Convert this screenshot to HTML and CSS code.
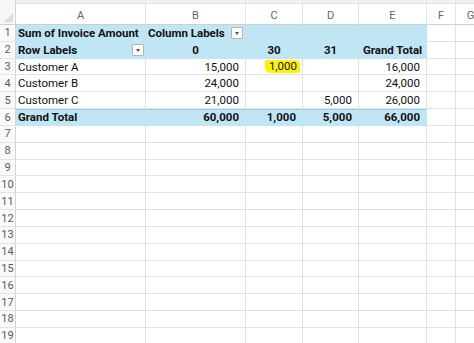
FILE: index.html
```html
<!DOCTYPE html>
<html lang="en">
<head>
    <meta charset="UTF-8">
    <title>Pivot Table</title>
    <link rel="stylesheet" href="styles.css">
</head>
<body>

<div class="sheet" id="sheet">
    <!-- column headers -->
    <div class="corner"><span class="corner-tri"></span></div>
    <div class="col-head">A</div>
    <div class="col-head">B</div>
    <div class="col-head">C</div>
    <div class="col-head">D</div>
    <div class="col-head">E</div>
    <div class="col-head">F</div>
    <div class="col-head">G</div>

    <!-- row 1 -->
    <div class="row-head">1</div>
    <div class="cell blue bold">Sum of Invoice Amount</div>
    <div class="cell blue bold">Column Labels <span class="drop drop-col"></span></div>
    <div class="cell blue"></div>
    <div class="cell blue"></div>
    <div class="cell blue"></div>
    <div class="cell"></div>
    <div class="cell"></div>

    <!-- row 2 -->
    <div class="row-head">2</div>
    <div class="cell blue bold">Row Labels <span class="drop drop-row"></span></div>
    <div class="cell blue bold center">0</div>
    <div class="cell blue bold center">30</div>
    <div class="cell blue bold center">31</div>
    <div class="cell blue bold center">Grand Total</div>
    <div class="cell"></div>
    <div class="cell"></div>

    <!-- row 3 -->
    <div class="row-head">3</div>
    <div class="cell">Customer A</div>
    <div class="cell num">15,000</div>
    <div class="cell num"><span class="marker">1,000</span></div>
    <div class="cell num"></div>
    <div class="cell num">16,000</div>
    <div class="cell"></div>
    <div class="cell"></div>

    <!-- row 4 -->
    <div class="row-head">4</div>
    <div class="cell">Customer B</div>
    <div class="cell num">24,000</div>
    <div class="cell num"></div>
    <div class="cell num"></div>
    <div class="cell num">24,000</div>
    <div class="cell"></div>
    <div class="cell"></div>

    <!-- row 5 -->
    <div class="row-head">5</div>
    <div class="cell">Customer C</div>
    <div class="cell num">21,000</div>
    <div class="cell num"></div>
    <div class="cell num">5,000</div>
    <div class="cell num">26,000</div>
    <div class="cell"></div>
    <div class="cell"></div>

    <!-- row 6 -->
    <div class="row-head">6</div>
    <div class="cell blue total bold">Grand Total</div>
    <div class="cell blue total bold num">60,000</div>
    <div class="cell blue total bold num">1,000</div>
    <div class="cell blue total bold num">5,000</div>
    <div class="cell blue total bold num">66,000</div>
    <div class="cell"></div>
    <div class="cell"></div>
</div>

<script>
    // fill the empty rows below the pivot table
    const sheet = document.getElementById("sheet");
    for (let r = 7; r <= 19; r++) {
        const head = document.createElement("div");
        head.className = "row-head";
        head.innerText = r;
        sheet.appendChild(head);
        for (let c = 0; c < 7; c++) {
            const cell = document.createElement("div");
            cell.className = "cell";
            sheet.appendChild(cell);
        }
    }
</script>

</body>
</html>
```

FILE: styles.css
```css
* {
    box-sizing: border-box;
}
html, body {
    margin: 0;
    padding: 0;
    background: #ffffff;
    overflow: hidden;
}
body {
    font-family: Roboto, "Liberation Sans", sans-serif;
    font-size: 11.5px;
    color: #111111;
}
.sheet {
    display: grid;
    grid-template-columns: 16px 130px 100px 57px 56px 68px 29px 30px;
    grid-template-rows: 25px;
    grid-auto-rows: 16.83px;
    width: 486px;
}
.corner {
    position: relative;
    background: #f7f7f7;
    border-right: 1px solid #d4d4d4;
    border-bottom: 1px solid #cfcfcf;
}
.corner-tri {
    position: absolute;
    right: 2px;
    bottom: 2px;
    width: 0;
    height: 0;
    border-left: 9px solid transparent;
    border-bottom: 9px solid #dcdcdc;
}
.col-head {
    display: flex;
    align-items: center;
    justify-content: center;
    padding-top: 6px;
    color: #666666;
    font-size: 11px;
    background: linear-gradient(#f2f2f2 0, #f2f2f2 3px, #e2e2e2 3px, #e2e2e2 4px, #ffffff 4px);
    border-right: 1px solid #e4e4e4;
    border-bottom: 1px solid #cfcfcf;
}
.row-head {
    display: flex;
    align-items: center;
    justify-content: center;
    color: #5c5c5c;
    font-size: 11px;
    background: #fafafa;
    border-right: 1px solid #d4d4d4;
    border-bottom: 1px solid #e4e4e4;
}
.cell {
    display: flex;
    align-items: center;
    padding: 0 6px 0 2px;
    white-space: nowrap;
    border-right: 1px solid #e2e2e2;
    border-bottom: 1px solid #e2e2e2;
}
.blue {
    background: #c0e6f5;
    border-right-color: #c0e6f5;
    border-bottom-color: #c0e6f5;
}
.total {
    box-shadow: inset 0 1px 0 #8fd0ec;
}
.bold {
    font-weight: bold;
}
.center {
    justify-content: center;
    padding: 0;
}
.num {
    justify-content: flex-end;
}
.marker {
    background: #fff200;
    padding: 0 3px 0 4px;
    margin-right: -4px;
    border-radius: 2px 4px 3px 5px;
    line-height: 13px;
}
.drop {
    position: relative;
    display: inline-block;
    width: 12px;
    height: 12px;
    background: #ffffff;
    border: 1px solid #b5b5b5;
    border-radius: 1px;
    margin-left: auto;
}
.drop::after {
    content: "";
    position: absolute;
    left: 3px;
    top: 4px;
    border-left: 2.5px solid transparent;
    border-right: 2.5px solid transparent;
    border-top: 3px solid #555555;
}
.drop-row {
    margin-right: -5px;
}
.drop-col {
    margin-right: -4px;
}
```
